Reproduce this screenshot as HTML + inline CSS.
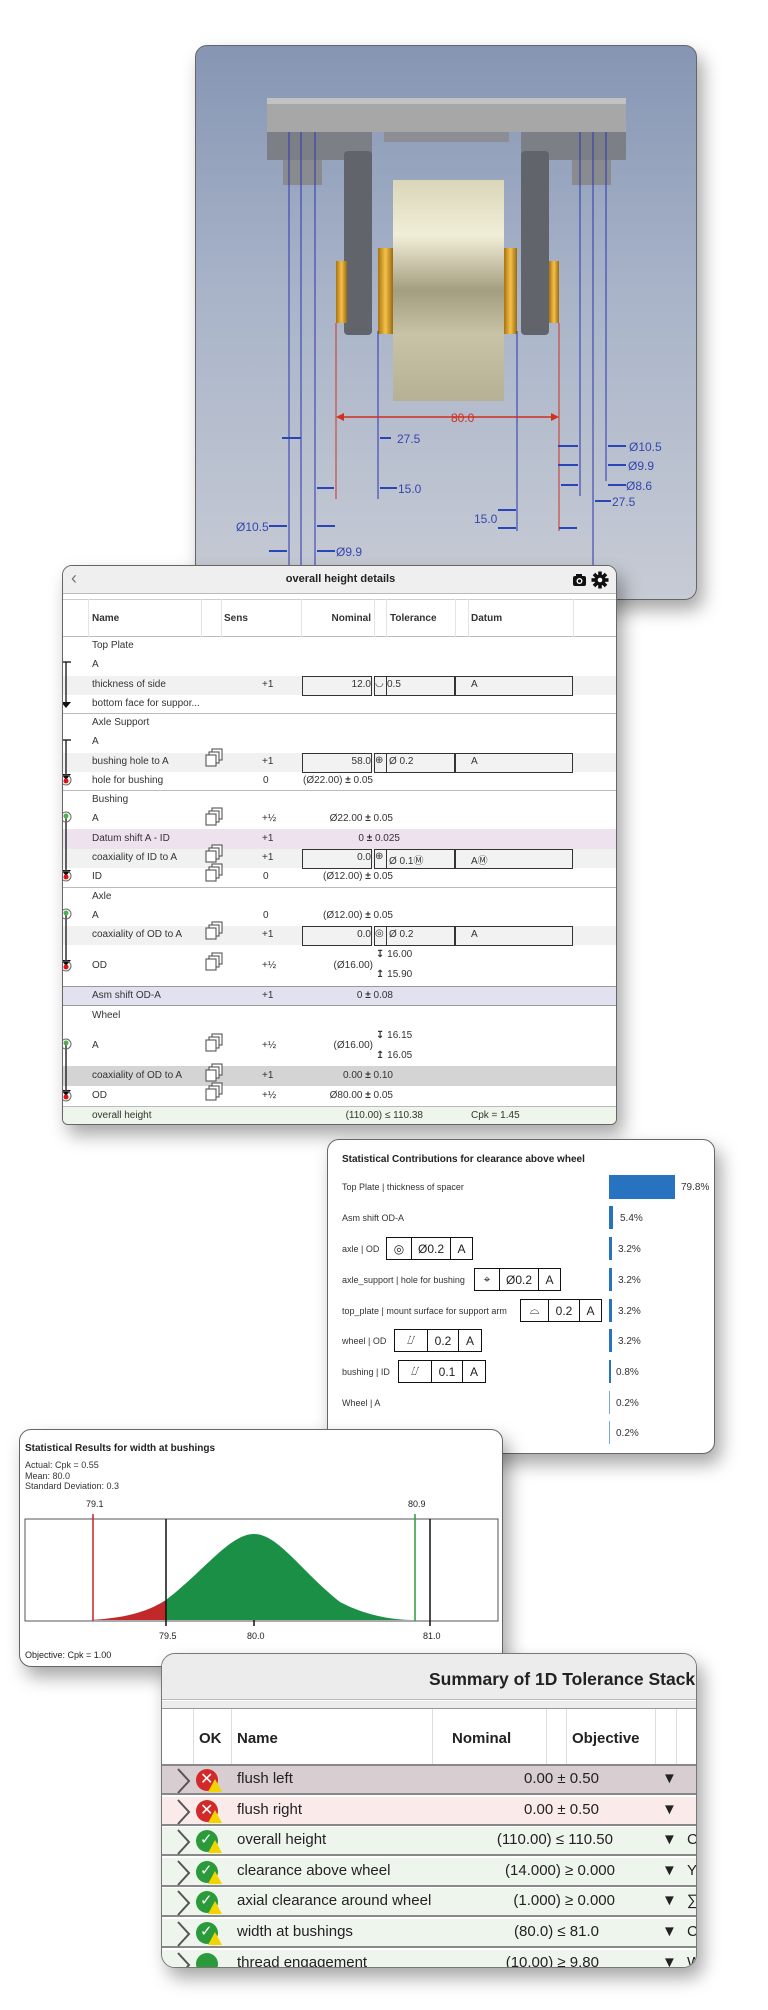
<!DOCTYPE html>
<html><head><meta charset="utf-8"><style>
*{margin:0;padding:0;box-sizing:border-box}
body{width:768px;height:2010px;background:#fff;position:relative;overflow:hidden;font-family:"Liberation Sans","DejaVu Sans",sans-serif;color:#222}
.a{position:absolute;white-space:nowrap}
.panel{position:absolute;overflow:hidden;border:1.5px solid #555;border-radius:12px;box-shadow:6px 10px 18px rgba(0,0,0,.35)}
.dt{font-size:10px;color:#333}
.cl{font-size:9px;color:#333}
.box{position:absolute;border:1.3px solid #333;background:#f2f2f2}
.fc{position:absolute;border:1.5px solid #111;display:flex;height:23px;font-size:12px;background:#fff}
.fc span{border-right:1.5px solid #111;display:flex;align-items:center;justify-content:center}
.fc span:last-child{border-right:none}
.bar{position:absolute;left:281px;background:#2873c0;width:4px;height:23px}
.pct{position:absolute;font-size:10px;color:#333}
.srow{position:absolute;left:0;width:540px;height:29px;border-bottom:2.5px solid #888}
.srow .n{position:absolute;left:75px;top:4px;font-size:15px;color:#222}
.srow .v{position:absolute;right:103px;top:4px;font-size:15px;color:#222}
.srow .t{position:absolute;left:500px;top:4px;font-size:15px}
.srow .x{position:absolute;left:525px;top:4px;font-size:15px}
.chev{position:absolute;left:14px;top:2px;width:16px;height:26px}
.ic{position:absolute;left:34px;top:3px;width:22px;height:22px;border-radius:50%}
.warn{position:absolute;left:46px;top:13px;width:0;height:0;border-left:7px solid transparent;border-right:7px solid transparent;border-bottom:13px solid #f2d400}
</style></head><body>

<!-- 3D panel -->
<div class="panel" style="left:195px;top:45px;width:502px;height:555px;background:linear-gradient(#8595b3,#a9b4c9 45%,#c7cbd4);border-color:#666">
<svg width="502" height="555" style="position:absolute;left:0;top:0">
<defs>
<linearGradient id="wh" x1="0" y1="0" x2="0" y2="1"><stop offset="0" stop-color="#d9d6b8"/><stop offset=".25" stop-color="#f1eed8"/><stop offset=".5" stop-color="#a49e80"/><stop offset=".7" stop-color="#c8c3a6"/><stop offset="1" stop-color="#b6b195"/></linearGradient>
<linearGradient id="br" x1="0" y1="0" x2="1" y2="0"><stop offset="0" stop-color="#a9720f"/><stop offset=".5" stop-color="#f4c24a"/><stop offset="1" stop-color="#9a6a10"/></linearGradient>
</defs>
<g transform="translate(-195,-45)">
<rect x="266" y="97" width="359" height="34" fill="#a7a7a7"/>
<rect x="266" y="97" width="359" height="6" fill="#c2c2c2"/>
<rect x="266" y="131" width="105" height="28" fill="#7d7f86"/>
<rect x="520" y="131" width="105" height="28" fill="#7d7f86"/>
<rect x="383" y="131" width="125" height="10" fill="#8c8e94"/>
<rect x="343" y="150" width="28" height="184" rx="4" fill="#62646c"/>
<rect x="520" y="150" width="28" height="184" rx="4" fill="#62646c"/>
<rect x="282" y="159" width="39" height="25" fill="#8a8b8f"/>
<rect x="571" y="159" width="39" height="25" fill="#8a8b8f"/>
<rect x="335" y="260" width="11" height="62" fill="url(#br)"/>
<rect x="377" y="247" width="15" height="86" fill="url(#br)"/>
<rect x="503" y="247" width="13" height="86" fill="url(#br)"/>
<rect x="548" y="260" width="10" height="62" fill="url(#br)"/>
<rect x="392" y="179" width="111" height="221" fill="url(#wh)"/>
<g stroke="#2a35b0" stroke-width="1">
<line x1="288" y1="131" x2="288" y2="600"/><line x1="300" y1="131" x2="300" y2="600"/><line x1="314" y1="131" x2="314" y2="600"/>
<line x1="377" y1="330" x2="377" y2="498"/><line x1="516" y1="330" x2="516" y2="530"/>
<line x1="579" y1="131" x2="579" y2="495"/><line x1="592" y1="131" x2="592" y2="600"/><line x1="605" y1="131" x2="605" y2="480"/>
</g>
<g stroke="#d03020" stroke-width="1"><line x1="335" y1="322" x2="335" y2="498"/><line x1="558" y1="322" x2="558" y2="530"/>
<line x1="338" y1="416" x2="555" y2="416" stroke-width="1.4"/></g>
<path d="M335 416l8-4v8z M558 416l-8-4v8z" fill="#d03020"/>
<g stroke="#2a45b8" stroke-width="2">
<line x1="281" y1="437" x2="300" y2="437"/><line x1="379" y1="437" x2="390" y2="437"/>
<line x1="316" y1="487" x2="333" y2="487"/><line x1="379" y1="487" x2="396" y2="487"/>
<line x1="557" y1="445" x2="577" y2="445"/><line x1="607" y1="445" x2="625" y2="445"/>
<line x1="557" y1="464" x2="577" y2="464"/><line x1="607" y1="464" x2="625" y2="464"/>
<line x1="560" y1="484" x2="577" y2="484"/><line x1="607" y1="484" x2="625" y2="484"/>
<line x1="594" y1="500" x2="610" y2="500"/>
<line x1="497" y1="509" x2="515" y2="509"/><line x1="497" y1="527" x2="515" y2="527"/><line x1="558" y1="527" x2="576" y2="527"/>
<line x1="268" y1="525" x2="286" y2="525"/><line x1="316" y1="525" x2="334" y2="525"/>
<line x1="268" y1="550" x2="286" y2="550"/><line x1="316" y1="550" x2="334" y2="550"/>
</g>
<g font-family="Liberation Sans,sans-serif" font-size="12" fill="#3546b0">
<text x="396" y="442">27.5</text><text x="397" y="492">15.0</text>
<text x="628" y="450">Ø10.5</text><text x="627" y="469">Ø9.9</text><text x="625" y="489">Ø8.6</text><text x="611" y="505">27.5</text>
<text x="473" y="522">15.0</text><text x="235" y="530">Ø10.5</text><text x="335" y="555">Ø9.9</text>
<text x="450" y="421" fill="#d03020">80.0</text>
</g></g></svg>
</div>

<!-- details panel -->
<div class="panel" style="left:62px;top:565px;width:555px;height:560px;background:#fff;border-color:#666;border-radius:10px 10px 6px 6px">
<div class="a" style="left:0;top:0;width:555px;height:28px;background:#efefef;border-bottom:1px solid #bbb"></div>
<div class="a" style="left:8px;top:2px;font-size:18px;color:#777">&#8249;</div>
<div class="a" style="left:0;width:555px;top:7px;text-align:center;font-size:11px;font-weight:bold">overall height details</div>
<svg class="a" style="left:509px;top:7px" width="15" height="14"><rect x="1" y="3" width="13" height="10" rx="2" fill="#111"/><rect x="4" y="1" width="6" height="3" fill="#111"/><circle cx="7.5" cy="8" r="3" fill="#fff"/><circle cx="7.5" cy="8" r="1.6" fill="#111"/></svg>
<svg class="a" style="left:528px;top:5px" width="18" height="18" viewBox="-9 -9 18 18"><g fill="#111"><circle r="5.5"/><g id="t"><rect x="-1.8" y="-8.5" width="3.6" height="4"/></g><use href="#t" transform="rotate(45)"/><use href="#t" transform="rotate(90)"/><use href="#t" transform="rotate(135)"/><use href="#t" transform="rotate(180)"/><use href="#t" transform="rotate(225)"/><use href="#t" transform="rotate(270)"/><use href="#t" transform="rotate(315)"/></g><circle r="2.3" fill="#fff"/></svg>
<div class="a" style="left:0;top:33px;width:555px;height:38px;border-top:1px solid #ccc;border-bottom:1.5px solid #bbb"></div>
<div class="a" style="left:25px;top:33px;height:38px;border-left:1px solid #e4e4e4"></div>
<div class="a" style="left:138px;top:33px;height:38px;border-left:1px solid #e4e4e4"></div>
<div class="a" style="left:158px;top:33px;height:38px;border-left:1px solid #e4e4e4"></div>
<div class="a" style="left:238px;top:33px;height:38px;border-left:1px solid #e4e4e4"></div>
<div class="a" style="left:311px;top:33px;height:38px;border-left:1px solid #e4e4e4"></div>
<div class="a" style="left:323px;top:33px;height:38px;border-left:1px solid #e4e4e4"></div>
<div class="a" style="left:392px;top:33px;height:38px;border-left:1px solid #e4e4e4"></div>
<div class="a" style="left:405px;top:33px;height:38px;border-left:1px solid #e4e4e4"></div>
<div class="a" style="left:510px;top:33px;height:38px;border-left:1px solid #e4e4e4"></div>
<div class="a dt" style="left:29px;top:47px;font-weight:bold">Name</div>
<div class="a dt" style="left:161px;top:47px;font-weight:bold">Sens</div>
<div class="a dt" style="left:240px;width:68px;text-align:right;top:47px;font-weight:bold">Nominal</div>
<div class="a dt" style="left:327px;top:47px;font-weight:bold">Tolerance</div>
<div class="a dt" style="left:408px;top:47px;font-weight:bold">Datum</div>

<div class="a" style="left:0;top:110px;width:555px;height:19px;background:#f1f1f1"></div>
<div class="a" style="left:0;top:147px;width:555px;border-top:1.5px solid #bbb"></div>
<div class="a" style="left:0;top:187px;width:555px;height:19px;background:#f1f1f1"></div>
<div class="a" style="left:0;top:224px;width:555px;border-top:1.5px solid #bbb"></div>
<div class="a" style="left:0;top:263px;width:555px;height:20px;background:#eee2ef"></div>
<div class="a" style="left:0;top:283px;width:555px;height:19px;background:#f1f1f1"></div>
<div class="a" style="left:0;top:321px;width:555px;border-top:1.5px solid #bbb"></div>
<div class="a" style="left:0;top:360px;width:555px;height:19px;background:#f1f1f1"></div>
<div class="a" style="left:0;top:420px;width:555px;height:20px;background:#e2e1f0;border-top:1.5px solid #999;border-bottom:1.5px solid #999"></div>
<div class="a" style="left:0;top:500px;width:555px;height:20px;background:#d4d4d4"></div>
<div class="a" style="left:0;top:540px;width:555px;height:20px;background:#eef5ea;border-top:1.5px solid #bbb"></div>

<div class="box" style="left:239px;top:110px;width:70px;height:20px"></div><div class="box" style="left:311px;top:110px;width:81px;height:20px"></div><div class="box" style="left:392px;top:110px;width:118px;height:20px"></div>
<div class="box" style="left:239px;top:187px;width:70px;height:20px"></div><div class="box" style="left:311px;top:187px;width:81px;height:20px"></div><div class="box" style="left:392px;top:187px;width:118px;height:20px"></div>
<div class="box" style="left:239px;top:283px;width:70px;height:20px"></div><div class="box" style="left:311px;top:283px;width:81px;height:20px"></div><div class="box" style="left:392px;top:283px;width:118px;height:20px"></div>
<div class="box" style="left:239px;top:360px;width:70px;height:20px"></div><div class="box" style="left:311px;top:360px;width:81px;height:20px"></div><div class="box" style="left:392px;top:360px;width:118px;height:20px"></div>
<div class="a" style="left:323px;top:110px;border-left:1px solid #333;height:20px"></div>
<div class="a" style="left:323px;top:187px;border-left:1px solid #333;height:20px"></div>
<div class="a" style="left:323px;top:283px;border-left:1px solid #333;height:20px"></div>
<div class="a" style="left:323px;top:360px;border-left:1px solid #333;height:20px"></div>

<div class="a dt" style="left:29px;top:74px">Top Plate</div>
<div class="a dt" style="left:29px;top:93px">A</div>
<div class="a dt" style="left:29px;top:113px">thickness of side</div><div class="a dt" style="left:199px;top:113px">+1</div>
<div class="a dt" style="left:240px;width:68px;text-align:right;top:113px">12.0</div><div class="a dt" style="left:312px;top:112px">&#9697;</div><div class="a dt" style="left:324px;top:113px">0.5</div><div class="a dt" style="left:408px;top:113px">A</div>
<div class="a dt" style="left:29px;top:132px">bottom face for suppor...</div>
<div class="a dt" style="left:29px;top:151px">Axle Support</div>
<div class="a dt" style="left:29px;top:170px">A</div>
<div class="a dt" style="left:29px;top:190px">bushing hole to A</div><div class="a dt" style="left:199px;top:190px">+1</div>
<div class="a dt" style="left:240px;width:68px;text-align:right;top:190px">58.0</div><div class="a dt" style="left:312px;top:189px">&#8853;</div><div class="a dt" style="left:326px;top:190px">Ø 0.2</div><div class="a dt" style="left:408px;top:190px">A</div>
<div class="a dt" style="left:29px;top:209px">hole for bushing</div><div class="a dt" style="left:200px;top:209px">0</div><div class="a dt" style="left:220px;width:90px;text-align:right;top:209px">(Ø22.00) <b>±</b> 0.05</div>
<div class="a dt" style="left:29px;top:228px">Bushing</div>
<div class="a dt" style="left:29px;top:247px">A</div><div class="a dt" style="left:199px;top:247px">+½</div><div class="a dt" style="left:220px;width:110px;text-align:right;top:247px">Ø22.00 <b>±</b> 0.05</div>
<div class="a dt" style="left:29px;top:267px">Datum shift A - ID</div><div class="a dt" style="left:199px;top:267px">+1</div><div class="a dt" style="left:220px;width:117px;text-align:right;top:267px">0 <b>±</b> 0.025</div>
<div class="a dt" style="left:29px;top:286px">coaxiality of ID to A</div><div class="a dt" style="left:199px;top:286px">+1</div>
<div class="a dt" style="left:240px;width:68px;text-align:right;top:286px">0.0</div><div class="a dt" style="left:312px;top:285px">&#8853;</div><div class="a dt" style="left:326px;top:286px">Ø 0.1Ⓜ</div><div class="a dt" style="left:408px;top:286px">AⓂ</div>
<div class="a dt" style="left:29px;top:305px">ID</div><div class="a dt" style="left:200px;top:305px">0</div><div class="a dt" style="left:220px;width:110px;text-align:right;top:305px">(Ø12.00) <b>±</b> 0.05</div>
<div class="a dt" style="left:29px;top:325px">Axle</div>
<div class="a dt" style="left:29px;top:344px">A</div><div class="a dt" style="left:200px;top:344px">0</div><div class="a dt" style="left:220px;width:110px;text-align:right;top:344px">(Ø12.00) <b>±</b> 0.05</div>
<div class="a dt" style="left:29px;top:363px">coaxiality of OD to A</div><div class="a dt" style="left:199px;top:363px">+1</div>
<div class="a dt" style="left:240px;width:68px;text-align:right;top:363px">0.0</div><div class="a dt" style="left:312px;top:362px">◎</div><div class="a dt" style="left:326px;top:363px">Ø 0.2</div><div class="a dt" style="left:408px;top:363px">A</div>
<div class="a dt" style="left:29px;top:394px">OD</div><div class="a dt" style="left:199px;top:394px">+½</div><div class="a dt" style="left:220px;width:90px;text-align:right;top:394px">(Ø16.00)</div>
<div class="a dt" style="left:313px;top:383px"><b>&#8615;</b> 16.00</div><div class="a dt" style="left:313px;top:403px"><b>&#8613;</b> 15.90</div>
<div class="a dt" style="left:29px;top:424px">Asm shift OD-A</div><div class="a dt" style="left:199px;top:424px">+1</div><div class="a dt" style="left:220px;width:110px;text-align:right;top:424px">0 <b>±</b> 0.08</div>
<div class="a dt" style="left:29px;top:444px">Wheel</div>
<div class="a dt" style="left:29px;top:474px">A</div><div class="a dt" style="left:199px;top:474px">+½</div><div class="a dt" style="left:220px;width:90px;text-align:right;top:474px">(Ø16.00)</div>
<div class="a dt" style="left:313px;top:464px"><b>&#8615;</b> 16.15</div><div class="a dt" style="left:313px;top:484px"><b>&#8613;</b> 16.05</div>
<div class="a dt" style="left:29px;top:504px">coaxiality of OD to A</div><div class="a dt" style="left:199px;top:504px">+1</div><div class="a dt" style="left:220px;width:110px;text-align:right;top:504px">0.00 <b>±</b> 0.10</div>
<div class="a dt" style="left:29px;top:524px">OD</div><div class="a dt" style="left:199px;top:524px">+½</div><div class="a dt" style="left:220px;width:110px;text-align:right;top:524px">Ø80.00 <b>±</b> 0.05</div>
<div class="a dt" style="left:29px;top:544px">overall height</div><div class="a dt" style="left:220px;width:140px;text-align:right;top:544px">(110.00) ≤ 110.38</div><div class="a dt" style="left:408px;top:544px">Cpk = 1.45</div>

<svg class="a" style="left:0;top:0" width="220" height="560">
<g fill="#fff" stroke="#555" stroke-width="1.1">
<g id="sk"><rect x="149" y="183" width="10" height="11"/><rect x="146" y="186" width="10" height="11"/><rect x="143" y="189" width="10" height="11"/></g>
<use href="#sk" y="59"/><use href="#sk" y="96"/><use href="#sk" y="115"/><use href="#sk" y="173"/><use href="#sk" y="204"/><use href="#sk" y="285"/><use href="#sk" y="315"/><use href="#sk" y="334"/>
</g>
<g stroke="#111" stroke-width="1.3" fill="none">
<line x1="3" y1="96" x2="3" y2="140"/><line x1="-2" y1="96" x2="8" y2="96"/>
<line x1="3" y1="174" x2="3" y2="212"/><line x1="-2" y1="174" x2="8" y2="174"/>
<line x1="3" y1="251" x2="3" y2="308"/>
<line x1="3" y1="348" x2="3" y2="398"/>
<line x1="3" y1="478" x2="3" y2="528"/>
</g>
<g fill="#111"><path d="M-2 136h10l-5 6z"/><path d="M-2 208h10l-5 6z"/><path d="M-2 304h10l-5 6z"/><path d="M-2 394h10l-5 6z"/><path d="M-2 524h10l-5 6z"/></g>
<g stroke="#666" fill="none"><circle cx="3" cy="214" r="5"/><circle cx="3" cy="251" r="5"/><circle cx="3" cy="310" r="5"/><circle cx="3" cy="348" r="5"/><circle cx="3" cy="400" r="5"/><circle cx="3" cy="478" r="5"/><circle cx="3" cy="530" r="5"/></g>
<g fill="#e01010"><circle cx="3" cy="215" r="2.5"/><circle cx="3" cy="311" r="2.5"/><circle cx="3" cy="401" r="2.5"/><circle cx="3" cy="531" r="2.5"/></g>
<g fill="#4caf50"><circle cx="3" cy="250" r="2.5"/><circle cx="3" cy="347" r="2.5"/><circle cx="3" cy="477" r="2.5"/></g>
</svg>
</div>

<!-- contributions panel -->
<div class="panel" style="left:327px;top:1139px;width:388px;height:315px;background:#fff;border-color:#666">
<div class="a" style="left:14px;top:14px;font-size:10px;font-weight:bold;color:#222">Statistical Contributions for clearance above wheel</div>
<div class="a cl" style="left:14px;top:42px">Top Plate | thickness of spacer</div>
<div class="a" style="left:281px;top:35px;width:66px;height:24px;background:#2873c0"></div><div class="pct" style="left:353px;top:42px">79.8%</div>
<div class="a cl" style="left:14px;top:73px">Asm shift OD-A</div><div class="bar" style="top:66px;width:4px"></div><div class="pct" style="left:292px;top:73px">5.4%</div>
<div class="a cl" style="left:14px;top:104px">axle | OD</div>
<div class="fc" style="left:58px;top:97px;width:87px"><span style="width:25px">◎</span><span style="width:39px">Ø0.2</span><span style="flex:1">A</span></div>
<div class="bar" style="top:97px;width:3px"></div><div class="pct" style="left:290px;top:104px">3.2%</div>
<div class="a cl" style="left:14px;top:135px">axle_support | hole for bushing</div>
<div class="fc" style="left:146px;top:128px;width:87px"><span style="width:25px">⌖</span><span style="width:39px">Ø0.2</span><span style="flex:1">A</span></div>
<div class="bar" style="top:128px;width:3px"></div><div class="pct" style="left:290px;top:135px">3.2%</div>
<div class="a cl" style="left:14px;top:166px">top_plate | mount surface for support arm</div>
<div class="fc" style="left:192px;top:159px;width:82px"><span style="width:28px">⌓</span><span style="width:31px">0.2</span><span style="flex:1">A</span></div>
<div class="bar" style="top:159px;width:3px"></div><div class="pct" style="left:290px;top:166px">3.2%</div>
<div class="a cl" style="left:14px;top:196px">wheel | OD</div>
<div class="fc" style="left:66px;top:189px;width:88px"><span style="width:33px">⌰</span><span style="width:31px">0.2</span><span style="flex:1">A</span></div>
<div class="bar" style="top:189px;width:3px"></div><div class="pct" style="left:290px;top:196px">3.2%</div>
<div class="a cl" style="left:14px;top:227px">bushing | ID</div>
<div class="fc" style="left:70px;top:220px;width:88px"><span style="width:33px">⌰</span><span style="width:31px">0.1</span><span style="flex:1">A</span></div>
<div class="bar" style="top:220px;width:1.5px"></div><div class="pct" style="left:288px;top:227px">0.8%</div>
<div class="a cl" style="left:14px;top:258px">Wheel | A</div>
<div class="bar" style="top:251px;width:1px;background:#7aa8d8"></div><div class="pct" style="left:288px;top:258px">0.2%</div>
<div class="bar" style="top:281px;width:1px;background:#7aa8d8"></div><div class="pct" style="left:288px;top:288px">0.2%</div>
</div>

<!-- results panel -->
<div class="panel" style="left:19px;top:1429px;width:484px;height:238px;background:#fff;border-color:#666">
<div class="a" style="left:5px;top:13px;font-size:10px;font-weight:bold">Statistical Results for width at bushings</div>
<div class="a" style="left:5px;top:30px;font-size:9px;color:#333;line-height:10.5px">Actual: Cpk = 0.55<br>Mean: 80.0<br>Standard Deviation: 0.3</div>
<div class="a" style="left:66px;top:69px;font-size:9px">79.1</div>
<div class="a" style="left:388px;top:69px;font-size:9px">80.9</div>
<svg class="a" style="left:0;top:0" width="484" height="238">
<rect x="5" y="89" width="473" height="102" fill="#fff" stroke="#555"/>
<path d="M70 190 C110 188,130 180,146 170 L146 190Z" fill="#c0282a"/>
<path d="M146 170 C185 140,210 104,234 104 C258 104,280 140,320 172 C350 188,380 190,395 190 L146 190Z" fill="#1a8f45"/>
<line x1="73" y1="84" x2="73" y2="191" stroke="#d02020" stroke-width="1.5"/>
<line x1="395" y1="84" x2="395" y2="191" stroke="#2a9a3a" stroke-width="1.5"/>
<line x1="146" y1="89" x2="146" y2="196" stroke="#111" stroke-width="1.5"/>
<line x1="410" y1="89" x2="410" y2="196" stroke="#111" stroke-width="1.5"/>
<line x1="234" y1="190" x2="234" y2="196" stroke="#111" stroke-width="1.5"/>
</svg>
<div class="a" style="left:139px;top:201px;font-size:9px">79.5</div>
<div class="a" style="left:227px;top:201px;font-size:9px">80.0</div>
<div class="a" style="left:403px;top:201px;font-size:9px">81.0</div>
<div class="a" style="left:5px;top:220px;font-size:9px">Objective: Cpk = 1.00</div>
</div>

<!-- summary panel -->
<div class="panel" style="left:161px;top:1653px;width:536px;height:315px;background:#fff;border-color:#777;border-radius:14px">
<div class="a" style="left:0;top:0;width:540px;height:46px;background:#ececec;border-bottom:1px solid #bbb"></div>
<div class="a" style="left:0;top:47px;width:540px;height:8px;background:#ececec;border-bottom:1.5px solid #999"></div>
<div class="a" style="left:267px;top:15px;font-size:17.5px;font-weight:bold;color:#222">Summary of 1D Tolerance Stackup</div>
<div class="a" style="left:31px;top:55px;height:57px;border-left:1px solid #ddd"></div>
<div class="a" style="left:69px;top:55px;height:57px;border-left:1px solid #ddd"></div>
<div class="a" style="left:270px;top:55px;height:57px;border-left:1px solid #ddd"></div>
<div class="a" style="left:384px;top:55px;height:57px;border-left:1px solid #ddd"></div>
<div class="a" style="left:404px;top:55px;height:57px;border-left:1px solid #ddd"></div>
<div class="a" style="left:493px;top:55px;height:57px;border-left:1px solid #ddd"></div>
<div class="a" style="left:514px;top:55px;height:57px;border-left:1px solid #ddd"></div>
<div class="a" style="left:37px;top:76px;font-size:15px;font-weight:bold">OK</div>
<div class="a" style="left:75px;top:76px;font-size:15px;font-weight:bold">Name</div>
<div class="a" style="left:290px;top:76px;font-size:15px;font-weight:bold">Nominal</div>
<div class="a" style="left:410px;top:76px;font-size:15px;font-weight:bold">Objective</div>
<div class="a" style="left:0;top:110px;width:540px;border-top:2.5px solid #888"></div>

<div class="srow" style="top:112px;background:#d8cdd0"><svg class="chev" viewBox="0 0 16 26"><path d="M2 1l11 12L2 25" stroke="#555" stroke-width="2" fill="none"/></svg><div class="ic" style="background:#d22a2a"></div><div class="a" style="left:38px;top:3px;color:#fff;font-size:16px;font-weight:bold">✕</div><div class="warn"></div><div class="n">flush left</div><div class="v">0.00 ± 0.50</div><div class="t">▼</div></div>
<div class="srow" style="top:143px;background:#fbeaea"><svg class="chev" viewBox="0 0 16 26"><path d="M2 1l11 12L2 25" stroke="#555" stroke-width="2" fill="none"/></svg><div class="ic" style="background:#d22a2a"></div><div class="a" style="left:38px;top:3px;color:#fff;font-size:16px;font-weight:bold">✕</div><div class="warn"></div><div class="n">flush right</div><div class="v">0.00 ± 0.50</div><div class="t">▼</div></div>
<div class="srow" style="top:173px;background:#eef5ec"><svg class="chev" viewBox="0 0 16 26"><path d="M2 1l11 12L2 25" stroke="#555" stroke-width="2" fill="none"/></svg><div class="ic" style="background:#2a9a3a"></div><div class="a" style="left:38px;top:3px;color:#fff;font-size:15px;font-weight:bold">✓</div><div class="warn"></div><div class="n">overall height</div><div class="v" style="right:89px">(110.00) ≤ 110.50</div><div class="t">▼</div><div class="x">Cp</div></div>
<div class="srow" style="top:204px;background:#eef5ec"><svg class="chev" viewBox="0 0 16 26"><path d="M2 1l11 12L2 25" stroke="#555" stroke-width="2" fill="none"/></svg><div class="ic" style="background:#2a9a3a"></div><div class="a" style="left:38px;top:3px;color:#fff;font-size:15px;font-weight:bold">✓</div><div class="warn"></div><div class="n">clearance above wheel</div><div class="v" style="right:87px">(14.000) ≥ 0.000</div><div class="t">▼</div><div class="x">Yie</div></div>
<div class="srow" style="top:234px;background:#eef5ec"><svg class="chev" viewBox="0 0 16 26"><path d="M2 1l11 12L2 25" stroke="#555" stroke-width="2" fill="none"/></svg><div class="ic" style="background:#2a9a3a"></div><div class="a" style="left:38px;top:3px;color:#fff;font-size:15px;font-weight:bold">✓</div><div class="warn"></div><div class="n">axial clearance around wheel</div><div class="v" style="right:87px">(1.000) ≥ 0.000</div><div class="t">▼</div><div class="x">∑</div></div>
<div class="srow" style="top:265px;background:#eef5ec"><svg class="chev" viewBox="0 0 16 26"><path d="M2 1l11 12L2 25" stroke="#555" stroke-width="2" fill="none"/></svg><div class="ic" style="background:#2a9a3a"></div><div class="a" style="left:38px;top:3px;color:#fff;font-size:15px;font-weight:bold">✓</div><div class="warn"></div><div class="n">width at bushings</div><div class="v">(80.0) ≤ 81.0</div><div class="t">▼</div><div class="x">Cp</div></div>
<div class="srow" style="top:296px;background:#eef5ec"><svg class="chev" viewBox="0 0 16 26"><path d="M2 1l11 12L2 25" stroke="#555" stroke-width="2" fill="none"/></svg><div class="ic" style="background:#2a9a3a"></div><div class="n">thread engagement</div><div class="v">(10.00) ≥ 9.80</div><div class="t">▼</div><div class="x">W</div></div>
</div>
</body></html>
